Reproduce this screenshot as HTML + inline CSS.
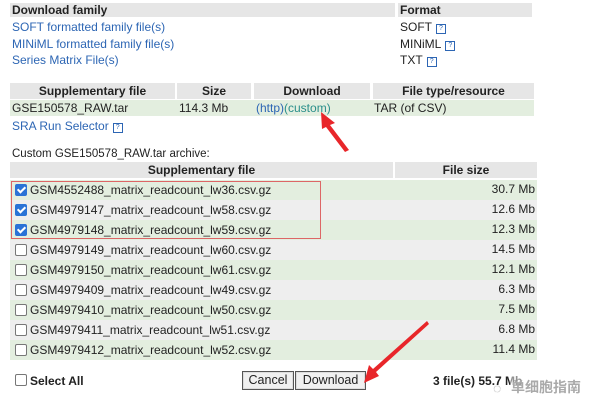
<!DOCTYPE html>
<html><head><style>
body{margin:0;width:600px;height:414px;background:#fff;font-family:"Liberation Sans","Noto Sans CJK SC",sans-serif;font-size:12px;color:#222;position:relative;overflow:hidden}
.a{position:absolute;white-space:nowrap}
.l{color:#2d66b4}
.q{display:inline-block;width:8px;height:8px;border:1px solid #2d66b4;font-size:7px;line-height:8px;text-align:center;color:#2d66b4;margin-left:4px;vertical-align:1px}
.hd{background:#e6e6e6;font-weight:bold}
.cb{position:absolute;width:10px;height:10px;border:1px solid #777;border-radius:2px;background:#fff;left:16px}
.cb.on{background:#2a73d6;border-color:#2a73d6}
.cb.on:after{content:"";position:absolute;left:3px;top:0px;width:3px;height:6px;border:solid #fff;border-width:0 2px 2px 0;transform:rotate(45deg)}
.row{position:absolute;left:10px;width:527px;height:20px}
.fn{position:absolute;left:20px;top:3px}
.sz{position:absolute;right:2px;top:2px}
.btn{position:absolute;top:371px;height:17px;border:1px solid #555;box-shadow:inset 0 0 0 1px #ddd;background:#f0f0f0;font-size:12.5px;line-height:17px;text-align:center}
</style></head><body>
<div class="a hd" style="left:10px;top:3px;width:383px;height:14px;padding-left:2px;line-height:14px">Download family</div>
<div class="a hd" style="left:398px;top:3px;width:132px;height:14px;padding-left:2px;line-height:14px">Format</div>
<div class="a l" style="left:12px;top:20px">SOFT formatted family file(s)</div>
<div class="a l" style="left:12px;top:37px">MINiML formatted family file(s)</div>
<div class="a l" style="left:12px;top:53px">Series Matrix File(s)</div>
<div class="a" style="left:400px;top:20px">SOFT<span class="q">?</span></div>
<div class="a" style="left:400px;top:37px">MINiML<span class="q">?</span></div>
<div class="a" style="left:400px;top:53px">TXT<span class="q">?</span></div>

<div class="a hd" style="left:10px;top:83px;width:165px;height:16px;text-align:center;line-height:16px">Supplementary file</div>
<div class="a hd" style="left:177px;top:83px;width:74px;height:16px;text-align:center;line-height:16px">Size</div>
<div class="a hd" style="left:254px;top:83px;width:116px;height:16px;text-align:center;line-height:16px">Download</div>
<div class="a hd" style="left:373px;top:83px;width:161px;height:16px;text-align:center;line-height:16px">File type/resource</div>
<div class="a" style="left:10px;top:100px;width:524px;height:16px;background:#e3eedf"></div>
<div class="a" style="left:12px;top:101px">GSE150578_RAW.tar</div>
<div class="a" style="left:179px;top:101px">114.3 Mb</div>
<div class="a" style="left:256px;top:101px"><span class="l">(http)</span><span style="color:#2a8f8a">(custom)</span></div>
<div class="a" style="left:374px;top:101px">TAR (of CSV)</div>
<div class="a l" style="left:12px;top:119px">SRA Run Selector<span class="q">?</span></div>

<div class="a" style="left:12px;top:148px;font-size:11.5px">Custom GSE150578_RAW.tar archive:</div>
<div class="a hd" style="left:10px;top:162px;width:383px;height:16px;text-align:center;line-height:16px">Supplementary file</div>
<div class="a hd" style="left:395px;top:162px;width:142px;height:16px;text-align:center;line-height:16px">File size</div>

<div class="row" style="top:180px;background:#e3eedf"><div class="cb on" style="left:5px;top:4px"></div><span class="fn">GSM4552488_matrix_readcount_lw36.csv.gz</span><span class="sz">30.7 Mb</span></div>
<div class="row" style="top:200px;background:#eeeeee"><div class="cb on" style="left:5px;top:4px"></div><span class="fn">GSM4979147_matrix_readcount_lw58.csv.gz</span><span class="sz">12.6 Mb</span></div>
<div class="row" style="top:220px;background:#e3eedf"><div class="cb on" style="left:5px;top:4px"></div><span class="fn">GSM4979148_matrix_readcount_lw59.csv.gz</span><span class="sz">12.3 Mb</span></div>
<div class="row" style="top:240px;background:#eeeeee"><div class="cb" style="left:5px;top:4px"></div><span class="fn">GSM4979149_matrix_readcount_lw60.csv.gz</span><span class="sz">14.5 Mb</span></div>
<div class="row" style="top:260px;background:#e3eedf"><div class="cb" style="left:5px;top:4px"></div><span class="fn">GSM4979150_matrix_readcount_lw61.csv.gz</span><span class="sz">12.1 Mb</span></div>
<div class="row" style="top:280px;background:#eeeeee"><div class="cb" style="left:5px;top:4px"></div><span class="fn">GSM4979409_matrix_readcount_lw49.csv.gz</span><span class="sz">6.3 Mb</span></div>
<div class="row" style="top:300px;background:#e3eedf"><div class="cb" style="left:5px;top:4px"></div><span class="fn">GSM4979410_matrix_readcount_lw50.csv.gz</span><span class="sz">7.5 Mb</span></div>
<div class="row" style="top:320px;background:#eeeeee"><div class="cb" style="left:5px;top:4px"></div><span class="fn">GSM4979411_matrix_readcount_lw51.csv.gz</span><span class="sz">6.8 Mb</span></div>
<div class="row" style="top:340px;background:#e3eedf"><div class="cb" style="left:5px;top:4px"></div><span class="fn">GSM4979412_matrix_readcount_lw52.csv.gz</span><span class="sz">11.4 Mb</span></div>
<div class="a" style="left:11px;top:181px;width:308px;height:56px;border:1px solid #d66"></div>

<div class="cb" style="left:15px;top:374px"></div>
<div class="a" style="left:30px;top:374px;font-weight:bold">Select All</div>
<div class="btn" style="left:242px;width:50px">Cancel</div>
<div class="btn" style="left:295px;width:69px">Download</div>
<div class="a" style="left:433px;top:374px;font-weight:bold">3 file(s) 55.7 Mb</div>
<div class="a" style="left:510px;top:376px;width:90px;height:20px;background:rgba(255,255,255,0.5)"></div>
<div class="a" style="left:493px;top:380px;color:#999;font-size:14px">◌</div>
<div class="a" style="left:511px;top:377px;color:#aaa;font-size:14px;font-weight:bold">单细胞指南</div>

<svg class="a" style="left:0;top:0" width="600" height="414">
<polygon points="321,112 335,123 330,125 349,150 345,152 326,127 322,129" fill="#e8262a"/>
<polygon points="364,383 369,365 373,369 427,321 429,324 376,372 379,376" fill="#e8262a"/>
</svg>
</body></html>
